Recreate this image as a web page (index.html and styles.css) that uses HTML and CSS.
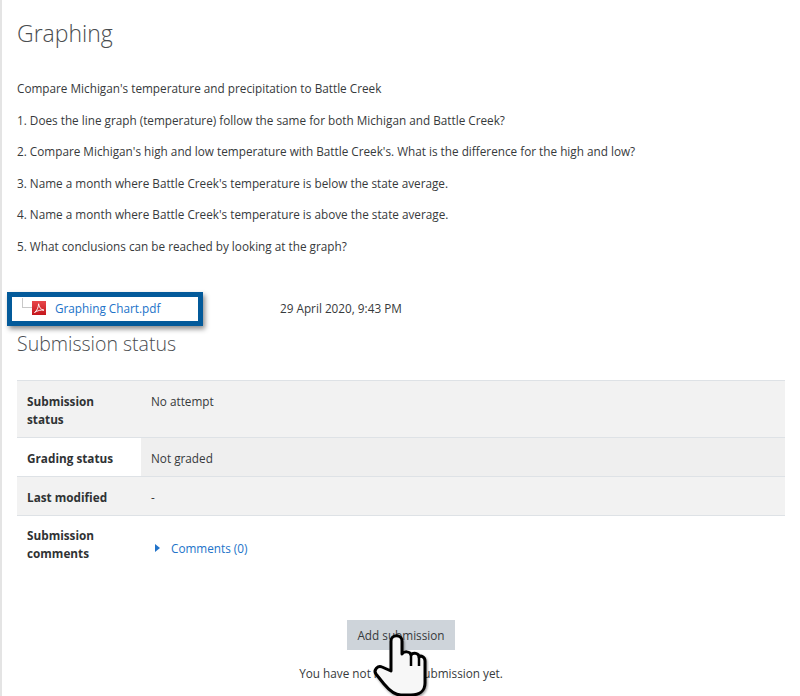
FILE: index.html
```html
<!DOCTYPE html>
<html lang="en">
<head>
<meta charset="utf-8">
<title>Graphing</title>
<link rel="stylesheet" href="styles.css">
</head>
<body>
<main class="page">
  <h2 class="title">Graphing</h2>
  <div class="intro">
    <p>Compare Michigan's temperature and precipitation to Battle Creek</p>
    <p>1. Does the line graph (temperature) follow the same for both Michigan and Battle Creek?</p>
    <p>2. Compare Michigan's high and low temperature with Battle Creek's. What is the difference for the high and low?</p>
    <p>3. Name a month where Battle Creek's temperature is below the state average.</p>
    <p>4. Name a month where Battle Creek's temperature is above the state average.</p>
    <p>5. What conclusions can be reached by looking at the graph?</p>
  </div>
  <div class="file-row">
    <div class="file-name">
      <span class="tree"></span>
      <svg class="pdf" width="14" height="14" viewBox="0 0 14 14">
        <defs><linearGradient id="pdfred" x1="0" y1="0" x2="0" y2="1"><stop offset="0" stop-color="#e8474a"/><stop offset="1" stop-color="#c4161c"/></linearGradient></defs>
        <rect width="14" height="14" fill="url(#pdfred)"/>
        <path d="M2.500 11.500C5 10 6.500 6 6.600 2.800 7 6 8.500 8.500 12 9.200 9 8.800 5.500 9.500 2.500 11.500Z" fill="none" stroke="#fff" stroke-width=".9"/>
      </svg>
      <a href="#" class="link">Graphing Chart.pdf</a>
    </div>
    <span class="file-date">29 April 2020, 9:43 PM</span>
    <div class="callout"></div>
  </div>
  <h3 class="section">Submission status</h3>
  <table class="status">
    <tr class="shade">
      <th>Submission status</th>
      <td>No attempt</td>
    </tr>
    <tr class="graded">
      <th>Grading status</th>
      <td>Not graded</td>
    </tr>
    <tr class="shade">
      <th>Last modified</th>
      <td>-</td>
    </tr>
    <tr class="last">
      <th>Submission comments</th>
      <td class="middle"><a href="#" class="link comments"><span class="caret"></span>Comments (0)</a></td>
    </tr>
  </table>
  <div class="actions">
    <button class="add" type="button">Add submission</button>
    <p class="note">You have not made a submission yet.</p>
    <svg class="hand" width="56" height="66" viewBox="0 0 56 66">
      <defs><filter id="shadow" x="-20%" y="-10%" width="140%" height="130%"><feDropShadow dx="1" dy="1.500" stdDeviation="1.200" flood-opacity=".4"/></filter></defs>
      <path d="M18 38 L18 8 C18 1 29 1 29 8 L29 21 C31 18 37 18 38 22 C40 19 46 20 46 24 C48 22 52 24 52 28 L52 50 C52 58 46 62 38 62 L28 62 C22 62 16 57 11 51 L3 41 C0 37 5 32 9 34 Z" fill="#f7f7f7" stroke="#000" stroke-width="3" stroke-linejoin="round" filter="url(#shadow)"/>
      <path d="M38 22 V33 M46 24 V33" stroke="#000" stroke-width="2.500" fill="none"/>
    </svg>
  </div>
</main>
</body>
</html>
```
FILE: styles.css
```css
* { box-sizing: border-box; }
html, body { margin: 0; padding: 0; background: #fff; }
body {
  font-family: "Open Sans", "Noto Sans", sans-serif;
  font-size: 11.750px;
  line-height: 18px;
  color: #373a3c;
  height: 696px;
  overflow: hidden;
}
.page {
  width: 800px;
  height: 696px;
  padding: 0 15px;
  border-left: 2px solid #e4e4e4;
}
.title {
  margin: 0;
  padding-top: 17px;
  height: 79px;
  font-size: 23px;
  line-height: 32px;
  font-weight: 300;
  color: #4a4d50;
}
.intro p { margin: 0 0 13.500px; height: 18px; }
.file-row {
  position: relative;
  display: flex;
  align-items: center;
  margin-top: 44px;
  height: 18px;
}
.file-name {
  display: flex;
  align-items: center;
  width: 263px;
}
.tree {
  width: 10px;
  height: 10px;
  margin: -9px 0 0 5px;
  border-left: 1px solid #c8c8c8;
  border-bottom: 1px solid #c8c8c8;
}
.pdf { margin-right: 9px; }
.link { color: #2273c9; text-decoration: none; }
.callout {
  position: absolute;
  left: -10px;
  top: -7px;
  width: 196px;
  height: 34px;
  border: 5px solid #035a9a;
  box-shadow: 2px 3px 5px rgba(0,0,0,.45);
}
.section {
  margin: 13px 0 0;
  height: 50px;
  font-size: 19.500px;
  line-height: 28px;
  font-weight: 300;
  color: #4a4d50;
}
.status {
  width: 768px;
  border-collapse: collapse;
  table-layout: fixed;
}
.status th, .status td {
  border-top: 1px solid #dee2e6;
  padding: 11px 10px 9px;
  text-align: left;
  vertical-align: top;
}
.status th { width: 124px; font-weight: 700; color: #2f3234; }
.shade th, .shade td { background: #f2f2f2; }
.graded td { background: #efefef; }
.status .last th { padding: 10px; }
.status .middle { vertical-align: middle; padding-top: 14px; padding-bottom: 6px; }
.comments { display: inline-flex; align-items: center; padding-left: 4px; }
.caret {
  width: 0;
  height: 0;
  margin-right: 11px;
  border-left: 5px solid #2273c9;
  border-top: 4px solid transparent;
  border-bottom: 4px solid transparent;
}
.actions {
  position: relative;
  margin-top: 48px;
  text-align: center;
}
.add {
  display: block;
  margin: 0 auto;
  width: 108px;
  height: 30px;
  border: 0;
  background: #ced4da;
  color: #373a3c;
  font: inherit;
  padding: 0;
}
.note { margin: 14px 0 0; }
.hand {
  position: absolute;
  left: 356px;
  top: 13px;
}
```
